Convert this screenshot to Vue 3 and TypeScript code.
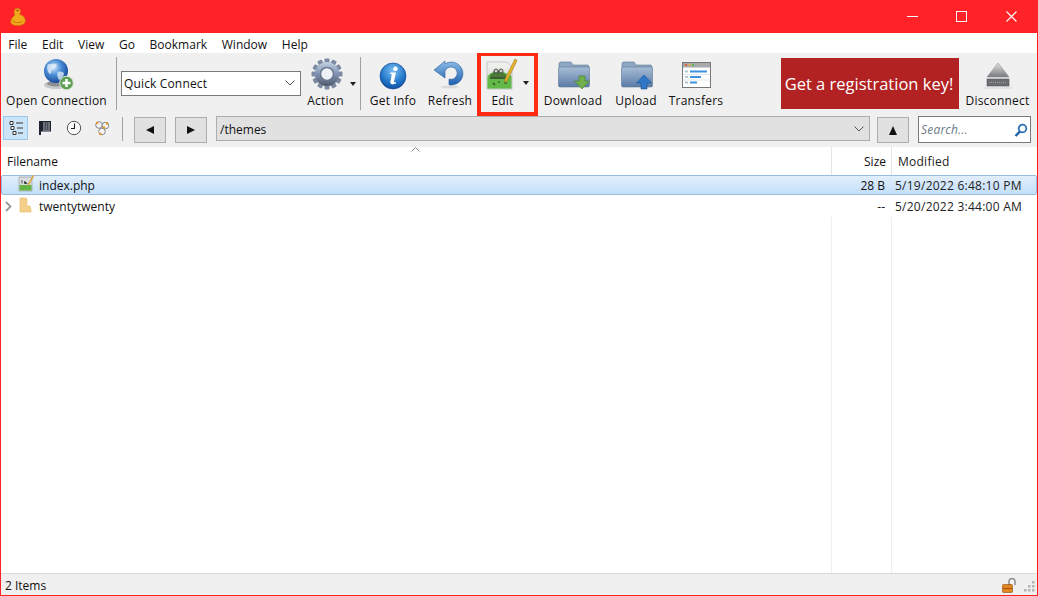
<script setup lang="ts">
interface FileRow {
  name: string
  size: string
  modified: string
  selected?: boolean
  folder?: boolean
}

const menuItems = ['File', 'Edit', 'View', 'Go', 'Bookmark', 'Window', 'Help']

const files: FileRow[] = [
  { name: 'index.php', size: '28 B', modified: '5/19/2022 6:48:10 PM', selected: true },
  { name: 'twentytwenty', size: '--', modified: '5/20/2022 3:44:00 AM', folder: true },
]

const gearTeeth = [0, 30, 60, 90, 120, 150, 180, 210, 240, 270, 300, 330]
</script>

<template>
  <div class="window">
    <header class="titlebar">
      <svg class="titlebar__duck" width="16" height="20" viewBox="0 0 16 20">
        <path d="M6 1.500c2.200-1 4.500.4 4.500 2.800 0 1.300-.7 2-1 3 2 .6 5.500 2.200 5.800 6 .2 3-2.300 5-7 5.200C4 18.700.8 17.500.8 14.500c0-2.700 2.200-4.800 4-6.300C3.800 6 3.700 2.700 6 1.500z" fill="#f2a91c" stroke="#c9720e" stroke-width=".7"/>
        <path d="M3 14c2 2 7 2.200 9.500.3" fill="none" stroke="#c9720e" stroke-width="1"/>
        <circle cx="7.500" cy="3.500" r="1" fill="#8a4b08"/>
      </svg>
      <div class="titlebar__controls">
        <button class="winbtn">
          <svg width="11" height="11" viewBox="0 0 11 11"><path d="M0 5.500h11" stroke="#fff" stroke-width="1"/></svg>
        </button>
        <button class="winbtn">
          <svg width="11" height="11" viewBox="0 0 11 11"><rect x=".5" y=".5" width="10" height="10" fill="none" stroke="#fff"/></svg>
        </button>
        <button class="winbtn">
          <svg width="11" height="11" viewBox="0 0 11 11"><path d="M.5.500l10 10M10.500.500l-10 10" stroke="#fff" stroke-width="1.100"/></svg>
        </button>
      </div>
    </header>

    <nav class="menu">
      <span v-for="item in menuItems" :key="item" class="menu__item">{{ item }}</span>
    </nav>

    <div class="toolbar">
      <div class="tool tool--open">
        <svg class="tool__icon" width="34" height="34" viewBox="0 0 34 34">
          <defs>
            <radialGradient id="globe" cx=".4" cy=".35" r=".7">
              <stop offset="0" stop-color="#d6e9fa"/>
              <stop offset=".45" stop-color="#4b8fd6"/>
              <stop offset="1" stop-color="#123f92"/>
            </radialGradient>
          </defs>
          <ellipse cx="16" cy="28" rx="12" ry="4" fill="#c4c6c8"/>
          <ellipse cx="16" cy="26.500" rx="9" ry="3" fill="#8b8f92"/>
          <circle cx="16" cy="14" r="12" fill="url(#globe)"/>
          <path d="M8 7c3 1 5-1 8 0 2 1 0 4-3 5-2 1-1 4-3 5-2-1-4-6-2-10zM18 15c3-1 6 0 6 2-1 3-3 5-5 6-1-2-3-6-1-8z" fill="#e4eff9" opacity=".75"/>
          <circle cx="26.500" cy="26" r="6.800" fill="#5f9e55" stroke="#d8e6d3" stroke-width="1"/>
          <path d="M26.500 22v8M22.500 26h8" stroke="#fff" stroke-width="2.400"/>
        </svg>
        <span class="tool__label">Open Connection</span>
      </div>
      <div class="separator"></div>

      <div class="combo">
        <span class="combo__text">Quick Connect</span>
        <svg width="10" height="6" viewBox="0 0 10 6"><path d="M.5.500L5 5 9.500.500" fill="none" stroke="#555" stroke-width="1"/></svg>
      </div>

      <div class="tool tool--action">
        <svg class="tool__icon" width="34" height="34" viewBox="0 0 34 34">
          <defs>
            <linearGradient id="gear" x1="0" y1="0" x2="0" y2="1">
              <stop offset="0" stop-color="#c3d0e2"/>
              <stop offset=".5" stop-color="#7f93b2"/>
              <stop offset="1" stop-color="#50586a"/>
            </linearGradient>
          </defs>
          <g transform="translate(18 17)">
            <rect v-for="a in gearTeeth" :key="a" x="-2.500" y="-15.500" width="5" height="6" rx="1" fill="#7c8aa3" :transform="`rotate(${a})`"/>
            <circle r="12" fill="url(#gear)"/>
            <circle r="6.500" fill="#eef2f6" stroke="#69788f" stroke-width="1.500"/>
          </g>
        </svg>
        <span class="tool__label">Action</span>
      </div>
      <i class="caret caret--action"></i>
      <div class="separator separator--action"></div>

      <div class="tool tool--info">
        <svg class="tool__icon" width="34" height="34" viewBox="0 0 34 34">
          <defs>
            <radialGradient id="info" cx=".5" cy=".3" r=".8">
              <stop offset="0" stop-color="#7cc0f2"/>
              <stop offset=".6" stop-color="#1f74c8"/>
              <stop offset="1" stop-color="#0a3f8f"/>
            </radialGradient>
          </defs>
          <circle cx="17" cy="19" r="13" fill="url(#info)" stroke="#0d3f86" stroke-width=".6"/>
          <path d="M19.500 9.500a2.300 2.300 0 1 1-.1 0zM14.500 15.500h5.500l-2 9c0 1 1 1 2 .5l-.2 1.500c-2 1.200-5.800 1.300-5.500-1.500l1.500-8-1.800-.3z" fill="#fff"/>
        </svg>
        <span class="tool__label">Get Info</span>
      </div>

      <div class="tool tool--refresh">
        <svg class="tool__icon" width="34" height="34" viewBox="0 0 34 34">
          <defs>
            <linearGradient id="refresh" x1="0" y1="0" x2="0" y2="1">
              <stop offset="0" stop-color="#8dbde8"/>
              <stop offset="1" stop-color="#1f5fae"/>
            </linearGradient>
          </defs>
          <ellipse cx="17" cy="30" rx="9" ry="1.500" fill="#dadada"/>
          <path d="M1 13L12 4V7A11.500 11.500 0 1 1 16 27.800L16 22A6.200 6.200 0 1 0 12 14.500V21Z" fill="url(#refresh)" stroke="#2a5f9f" stroke-width=".6"/>
        </svg>
        <span class="tool__label">Refresh</span>
      </div>

      <div class="tool tool--edit">
        <div class="tool__editrow">
          <svg class="tool__icon" width="34" height="34" viewBox="0 0 34 34">
            <defs>
              <linearGradient id="editpaper" x1="0" y1="0" x2="0" y2="1">
                <stop offset="0" stop-color="#f1f3ef"/>
                <stop offset="1" stop-color="#cfd6cc"/>
              </linearGradient>
            </defs>
            <path d="M3 5h20l5 5v22H3z" fill="url(#editpaper)" stroke="#b9bdb8" stroke-width=".8"/>
            <path d="M3.500 19c4-4 8-5 11-5s8 2 13 5v12.500h-24z" fill="#62b948"/>
            <path d="M9 16c1-4 4-4 5-2 1-2 5-1 5 2 3 1 4 4 3 6H7c-2-2-1-5 2-6z" fill="#4c7a3a"/>
            <circle cx="12" cy="14" r="2" fill="#cfd6cc" stroke="#333" stroke-width=".8"/>
            <circle cx="17" cy="14" r="2" fill="#cfd6cc" stroke="#333" stroke-width=".8"/>
            <path d="M6 21h18M9 26l2 2M14 25h2M20 26h3" stroke="#2f3f2a" stroke-width="1.200"/>
            <path d="M33 3.500L23.500 23l-2.500 3 0-4L31 2z" fill="#eab52c" stroke="#9d7415" stroke-width=".6"/>
          </svg>
          <i class="caret caret--edit"></i>
        </div>
        <span class="tool__label tool__label--edit">Edit</span>
      </div>

      <div class="tool tool--download">
        <svg class="tool__icon" width="34" height="34" viewBox="0 0 34 34">
          <defs>
            <linearGradient id="folder" x1="0" y1="0" x2="0" y2="1">
              <stop offset="0" stop-color="#a8bdd6"/>
              <stop offset="1" stop-color="#5a7ba6"/>
            </linearGradient>
          </defs>
          <path d="M3 6.500l1-1.500h11l2 3h15l1 1.500V13H3z" fill="#8ea7c4" stroke="#5f7896" stroke-width=".6"/>
          <rect x="2.500" y="10" width="31" height="20" rx="1.500" fill="url(#folder)" stroke="#5f7896" stroke-width=".6"/>
          <path d="M23 19h6v5h4.500l-7.500 8-7.500-8H23z" fill="#6fb04a" stroke="#457a2c" stroke-width=".6"/>
        </svg>
        <span class="tool__label">Download</span>
      </div>

      <div class="tool tool--upload">
        <svg class="tool__icon" width="34" height="34" viewBox="0 0 34 34">
          <path d="M3 6.500l1-1.500h11l2 3h15l1 1.500V13H3z" fill="#8ea7c4" stroke="#5f7896" stroke-width=".6"/>
          <rect x="2.500" y="10" width="31" height="20" rx="1.500" fill="url(#folder)" stroke="#5f7896" stroke-width=".6"/>
          <path d="M22 32v-6h-4.500l7.500-8 7.500 8H28v6z" fill="#2e77c9" stroke="#1d518f" stroke-width=".6"/>
        </svg>
        <span class="tool__label">Upload</span>
      </div>

      <div class="tool tool--transfers">
        <svg class="tool__icon" width="34" height="34" viewBox="0 0 34 34">
          <rect x="3.500" y="5.500" width="28" height="25" fill="#fff" stroke="#777"/>
          <rect x="4" y="6" width="27" height="4.500" fill="#a9a9a9"/>
          <path d="M6 8h2" stroke="#e2603a" stroke-width="2"/>
          <path d="M9.500 8h2" stroke="#e8b13a" stroke-width="2"/>
          <path d="M13 8h2" stroke="#5fb64a" stroke-width="2"/>
          <path d="M6 14.500h3M6 20h3M6 25.500h3" stroke="#b5c3cf" stroke-width="2"/>
          <path d="M11 14.500h17M11 20h11M11 25.500h7" stroke="#3b93e0" stroke-width="2"/>
          <path d="M4 17.500h27M4 23h27" stroke="#e6e6e6"/>
        </svg>
        <span class="tool__label">Transfers</span>
      </div>

      <div class="toolbar__spacer"></div>
      <div class="regkey">Get a registration key!</div>

      <div class="tool tool--disconnect">
        <svg class="tool__icon" width="34" height="34" viewBox="0 0 34 34">
          <defs>
            <linearGradient id="eject" x1="0" y1="0" x2="0" y2="1">
              <stop offset="0" stop-color="#e3e3e3"/>
              <stop offset="1" stop-color="#77797c"/>
            </linearGradient>
          </defs>
          <path d="M17 6L28 20H6z" fill="url(#eject)" stroke="#8f9193" stroke-width=".6"/>
          <rect x="6" y="22" width="22" height="7" fill="#6a6c70" stroke="#55575a" stroke-width=".6"/>
          <path d="M8 25.500h18" stroke="#a1a3a6" stroke-dasharray="1 1"/>
          <path d="M3 31h28" stroke="#d4d4d4"/>
        </svg>
        <span class="tool__label">Disconnect</span>
      </div>
    </div>

    <div class="navbar">
      <div class="viewtabs">
        <div class="viewtab viewtab--active">
          <svg width="16" height="16" viewBox="0 0 16 16">
            <path d="M2 1.500h3v3H2zM5 11.500h3v3H5zM3 6.500h3v3H3z" fill="#fff" stroke="#333"/>
            <path d="M8 3h7M9 8h6M10 13h5" stroke="#333"/>
          </svg>
        </div>
        <div class="viewtab">
          <svg width="16" height="16" viewBox="0 0 16 16">
            <path d="M2 1h12v14H2z" fill="#1e2330"/>
            <path d="M6 2h7v9H6z" fill="#6d7078"/>
            <path d="M4 11.500h10V15H4z" fill="#f1f1f6"/>
            <path d="M8 3h3M8 5h3M8 7h3M8 9h3" stroke="#1e2330" stroke-dasharray="1 1"/>
          </svg>
        </div>
        <div class="viewtab">
          <svg width="16" height="16" viewBox="0 0 16 16">
            <circle cx="8" cy="8" r="6.700" fill="#fafafa" stroke="#555"/>
            <path d="M8.500 3.500v5H5" fill="none" stroke="#222" stroke-width="1.100"/>
          </svg>
        </div>
        <div class="viewtab viewtab--bonjour">
          <svg width="16" height="16" viewBox="0 0 16 16">
            <circle cx="5" cy="5" r="3.300" fill="#f4f4f4" stroke="#888"/>
            <circle cx="11.500" cy="5.500" r="3.300" fill="#f4f4f4" stroke="#888"/>
            <circle cx="8" cy="11.500" r="3.300" fill="#f4f4f4" stroke="#888"/>
            <circle cx="3" cy="3" r="1.200" fill="#e8962a"/>
            <circle cx="10" cy="7.500" r="1.200" fill="#e8962a"/>
            <circle cx="13" cy="3.500" r="1.200" fill="#e8962a"/>
            <circle cx="6.500" cy="14" r="1.200" fill="#e8962a"/>
          </svg>
        </div>
      </div>
      <div class="separator separator--nav"></div>
      <button class="navbtn navbtn--back"><i class="tri tri--left"></i></button>
      <button class="navbtn navbtn--forward"><i class="tri tri--right"></i></button>
      <div class="path">
        <span class="path__text">/themes</span>
        <svg width="10" height="6" viewBox="0 0 10 6"><path d="M.5.500L5 5 9.500.500" fill="none" stroke="#555" stroke-width="1"/></svg>
      </div>
      <button class="navbtn navbtn--up"><i class="tri tri--up"></i></button>
      <div class="search">
        <span class="search__text">Search...</span>
        <svg width="14" height="14" viewBox="0 0 14 14">
          <circle cx="8.500" cy="5.500" r="3.800" fill="#fff" stroke="#2b6fb8" stroke-width="1.800"/>
          <path d="M6 8.500l-4.500 4.500" stroke="#1f5ea6" stroke-width="2.400"/>
        </svg>
      </div>
    </div>

    <main class="list">
      <div class="list__head">
        <span class="cell cell--name">Filename</span>
        <span class="cell cell--size">Size</span>
        <span class="cell cell--modified">Modified</span>
        <svg class="list__sort" width="9" height="5" viewBox="0 0 9 5"><path d="M.5 4.500L4.500.500l4 4" fill="none" stroke="#888"/></svg>
      </div>

      <div
        v-for="file in files"
        :key="file.name"
        class="row"
        :class="{ 'row--selected': file.selected }"
      >
        <div class="cell cell--name row__name">
          <svg v-if="file.folder" class="row__expander" width="7" height="11" viewBox="0 0 7 11">
            <path d="M1 1l4.500 4.500L1 10" fill="none" stroke="#9a9a9a" stroke-width="1.800"/>
          </svg>
          <i v-else class="row__expander"></i>
          <svg v-if="file.folder" class="row__icon" width="17" height="17" viewBox="0 0 17 17">
            <path d="M2 1h5.500l1.500 1v7h3l1 4v2H2z" fill="#f4cf8a" stroke="#e7b868" stroke-width=".6"/>
          </svg>
          <svg v-else class="row__icon" width="17" height="17" viewBox="0 0 17 17">
            <path d="M1 2h13v14H1z" fill="#d9dde0" stroke="#8f9396" stroke-width=".6"/>
            <path d="M1.500 10h12v5.500h-12z" fill="#64b345"/>
            <path d="M4 5v3.500M6.500 6v2.500h3" stroke="#555" stroke-width="1"/>
            <path d="M16.500.500L11 10l-1.500 1 .3-2L15 0z" fill="#d9a93a"/>
          </svg>
          <span>{{ file.name }}</span>
        </div>
        <span class="cell cell--size">{{ file.size }}</span>
        <span class="cell cell--modified">{{ file.modified }}</span>
      </div>

      <div class="list__fill">
        <div class="cell cell--name"></div>
        <div class="cell cell--size"></div>
        <div class="cell cell--modified"></div>
      </div>
    </main>

    <footer class="statusbar">
      <span>2 Items</span>
      <div class="statusbar__right">
        <svg width="15" height="15" viewBox="0 0 15 15">
          <path d="M7 7V3.500a3 3 0 0 1 6 0V7" fill="none" stroke="#8c8c8c" stroke-width="1.500"/>
          <rect x=".5" y="6.500" width="10" height="8" rx="1" fill="#e0861e" stroke="#8f4a10" stroke-width=".6"/>
          <path d="M1 10.500h9" stroke="#b24f12"/>
        </svg>
        <svg class="statusbar__grip" width="11" height="11" viewBox="0 0 11 11">
          <path d="M8 0h2.500v2.500H8zM4 4h2.500v2.500H4zM8 4h2.500v2.500H8zM0 8h2.500v2.500H0zM4 8h2.500v2.500H4zM8 8h2.500v2.500H8z" fill="#b4b4b4"/>
        </svg>
      </div>
    </footer>
  </div>
</template>

<style scoped>
.window {
  width: 1038px;
  height: 596px;
  box-sizing: border-box;
  display: flex;
  flex-direction: column;
  border: 1px solid #ff2227;
  border-top: none;
  background: #fff;
  font-family: "Open Sans", "Noto Sans", sans-serif;
  font-size: 12px;
  color: #111;
  overflow: hidden;
}

.titlebar {
  height: 33px;
  flex: none;
  display: flex;
  align-items: center;
  justify-content: space-between;
  background: #ff2227;
  padding-left: 9px;
}

.titlebar__controls {
  display: flex;
  padding-right: 1px;
}

.winbtn {
  width: 49.500px;
  height: 33px;
  padding: 0;
  border: none;
  background: none;
  display: flex;
  align-items: center;
  justify-content: center;
}

.menu {
  height: 20px;
  flex: none;
  box-sizing: border-box;
  display: flex;
  align-items: center;
  padding-top: 2px;
  background: #fff;
}

.menu__item {
  padding: 0 7.350px;
}

.toolbar {
  height: 63px;
  flex: none;
  display: flex;
  align-items: stretch;
  background: #f0f0f0;
}

.tool {
  flex: none;
  display: flex;
  flex-direction: column;
  align-items: center;
  padding-top: 4px;
  box-sizing: border-box;
}

.tool__icon {
  display: block;
  flex: none;
}

.tool__label {
  margin-top: 1px;
  line-height: 17px;
  letter-spacing: .2px;
  white-space: nowrap;
}

.tool__label--edit {
  padding-right: 10px;
}

.tool--open { width: 111px; margin-right: 4px; }
.tool--action { width: 49px; }
.tool--info { width: 62px; margin-left: 1px; }
.tool--refresh { width: 52px; }
.tool--download { width: 68px; padding-left: 2px; }
.tool--upload { width: 60px; }
.tool--transfers { width: 60px; }
.tool--disconnect { width: 77px; margin-right: 1px; }

.tool--edit {
  width: 61px;
  margin-left: 1px;
  border: 4px solid #ff2a12;
  border-top-width: 3px;
  padding-top: 1px;
}

.tool__editrow {
  display: flex;
  align-items: flex-start;
  align-self: flex-start;
  padding-left: 3px;
}

.caret {
  display: block;
  flex: none;
  width: 0;
  height: 0;
  border-left: 3.500px solid transparent;
  border-right: 3.500px solid transparent;
  border-top: 4px solid #222;
}

.caret--action {
  align-self: center;
  margin: 0 0 2px 0;
}

.caret--edit {
  margin: 24px 0 0 5px;
}

.separator {
  flex: none;
  width: 1px;
  margin: 4px 0 6px;
  background: #a0a0a0;
}

.separator--action {
  margin-left: 4px;
}

.combo {
  flex: none;
  align-self: center;
  box-sizing: border-box;
  width: 180px;
  height: 25px;
  margin: 0 0 3px 4px;
  padding: 0 5px 0 2px;
  display: flex;
  align-items: center;
  justify-content: space-between;
  background: #fff;
  border: 1px solid #7a7a7a;
  letter-spacing: .15px;
}

.toolbar__spacer {
  flex: 1;
}

.regkey {
  flex: none;
  align-self: flex-start;
  box-sizing: border-box;
  margin-top: 5px;
  padding-right: 2px;
  width: 178px;
  height: 51px;
  display: flex;
  align-items: center;
  justify-content: center;
  background: #b22222;
  color: #fff;
  font-size: 16.500px;
  white-space: nowrap;
}

.navbar {
  height: 31px;
  flex: none;
  box-sizing: border-box;
  display: flex;
  align-items: flex-start;
  background: #f0f0f0;
}

.viewtabs {
  display: flex;
  padding-left: 2px;
}

.viewtab {
  width: 25px;
  height: 24px;
  margin-right: 4px;
  display: flex;
  align-items: center;
  justify-content: center;
  box-sizing: border-box;
}

.viewtab--bonjour {
  margin-left: -1px;
  margin-right: 5px;
}

.viewtab--active {
  background: #cce4f7;
  border: 1px solid #99c9ef;
}

.separator--nav {
  height: 24px;
  margin: 1px 0 0 3px;
}

.navbtn {
  flex: none;
  box-sizing: border-box;
  width: 32px;
  height: 26px;
  padding: 0;
  margin-top: 1px;
  display: flex;
  align-items: center;
  justify-content: center;
  background: #e1e1e1;
  border: 1px solid #adadad;
}

.navbtn--back { margin-left: 11px; }
.navbtn--forward { margin-left: 9px; }
.navbtn--up { margin-left: 7px; }

.tri {
  display: block;
  width: 0;
  height: 0;
}

.tri--left {
  border-top: 4px solid transparent;
  border-bottom: 4px solid transparent;
  border-right: 8px solid #111;
}

.tri--right {
  border-top: 4px solid transparent;
  border-bottom: 4px solid transparent;
  border-left: 8px solid #111;
}

.tri--up {
  border-left: 4.500px solid transparent;
  border-right: 4.500px solid transparent;
  border-bottom: 9px solid #111;
}

.path {
  flex: none;
  box-sizing: border-box;
  width: 654px;
  height: 25px;
  margin-left: 9px;
  padding: 0 5px 0 3px;
  display: flex;
  align-items: center;
  justify-content: space-between;
  background: #e1e1e1;
  border: 1px solid #adadad;
}

.path__text {
  padding-top: 2px;
}

.search {
  flex: none;
  box-sizing: border-box;
  width: 113px;
  height: 27px;
  margin-left: 9px;
  padding: 0 2px 0 2px;
  display: flex;
  align-items: center;
  justify-content: space-between;
  background: #fff;
  border: 1px solid #7a7a7a;
}

.search__text {
  font-style: italic;
  color: #6d7a86;
  letter-spacing: .2px;
}

.list {
  flex: 1;
  min-height: 0;
  display: flex;
  flex-direction: column;
  background: #fff;
}

.list__head {
  display: grid;
  grid-template-columns: 830px 61px 1fr;
  height: 28px;
  flex: none;
  align-items: stretch;
  position: relative;
}

.list__fill {
  display: grid;
  grid-template-columns: 830px 61px 1fr;
  flex: 1;
  min-height: 0;
}

.list__head .cell {
  display: flex;
  align-items: center;
}

.list__head .cell--size {
  justify-content: flex-end;
  border-left: 1px solid #e5e5e5;
  border-right: 1px solid #e5e5e5;
}

.list__head .cell--modified {
  padding-left: 6px;
}

.list__sort {
  position: absolute;
  left: 410px;
  top: 0;
}

.cell--name {
  padding-left: 6px;
}

.cell--size {
  text-align: right;
  padding-right: 5px;
}

.cell--modified {
  padding-left: 3px;
  white-space: nowrap;
  letter-spacing: .25px;
  color: #222;
}

.row {
  display: grid;
  grid-template-columns: 829px 61px 1fr;
  height: 21px;
  flex: none;
  align-items: center;
  box-sizing: border-box;
  border: 1px solid transparent;
}

.row .cell--size {
  padding-right: 7px;
}

.row--selected {
  height: 20px;
  margin-bottom: 1px;
  background: linear-gradient(#e2effc, #c3dff8);
  border-color: #99bcdc;
  border-radius: 2px;
}

.row__name {
  display: flex;
  align-items: center;
  padding-left: 3px;
}

.row__expander {
  display: block;
  width: 7px;
  height: 11px;
  margin-right: 6px;
  flex: none;
}

.row__icon {
  flex: none;
  margin-right: 4px;
  margin-top: -3px;
}

.list__fill .cell--size {
  border-left: 1px solid #efefef;
  border-right: 1px solid #efefef;
}

.statusbar {
  height: 22px;
  flex: none;
  box-sizing: border-box;
  display: flex;
  align-items: center;
  justify-content: space-between;
  padding: 1px 2px 0 4px;
  background: #f0f0f0;
  border-top: 1px solid #d9d9d9;
}

.statusbar__right {
  display: flex;
  align-items: center;
}

.statusbar__grip {
  margin: 3px 0 0 7px;
}
</style>

<style>
html, body {
  margin: 0;
  background: #fff;
}
</style>
